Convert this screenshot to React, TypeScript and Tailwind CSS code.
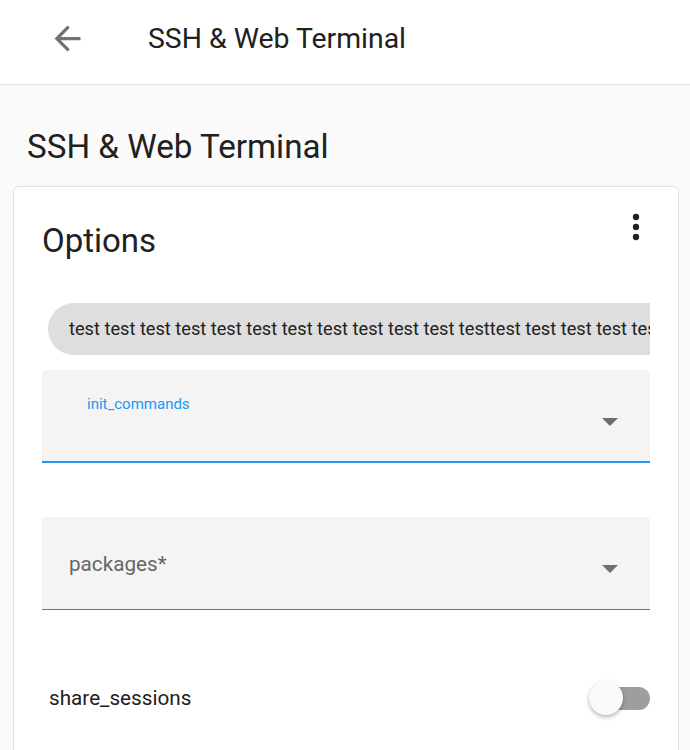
import React from 'react';

const ArrowBack = () => (
  <svg viewBox="0 0 24 24" className="w-[39px] h-[39px]" fill="#737373">
    <path d="M20 11H7.83l5.59-5.59L12 4l-8 8 8 8 1.41-1.41L7.83 13H20v-2z" />
  </svg>
);

const MoreVert = () => (
  <svg viewBox="0 0 24 24" className="w-[40px] h-[40px]" fill="#212121">
    <circle cx="12" cy="6" r="1.9" />
    <circle cx="12" cy="12" r="1.9" />
    <circle cx="12" cy="18" r="1.9" />
  </svg>
);

const DropArrow = () => (
  <svg viewBox="0 0 16 8" className="w-[16px] h-[8px] mt-[48px] mr-[32px] shrink-0" fill="#6e6e6e">
    <polygon points="0,0 16,0 8,8" />
  </svg>
);

const App = () => {
  const chipText =
    'test test test test test test test test test test test testtest test test test test test test';

  return (
    <div className="w-[690px] h-[750px] overflow-hidden bg-[#fafafa] text-[#212121] font-['Roboto',sans-serif]">
      {/* toolbar */}
      <div className="h-[85px] bg-white border-b-[1.5px] border-[#e0e0e0] flex items-center pl-[48px] pb-[8px]">
        <ArrowBack />
        <span className="ml-[61px] text-[28.4px] leading-[33px]">SSH &amp; Web Terminal</span>
      </div>

      <div className="pt-[42px]">
        <h1 className="pl-[27px] text-[33.2px] leading-[40px] mb-[19px]">SSH &amp; Web Terminal</h1>

        <div className="ml-[13px] mr-[11px] bg-white border border-[#e0e0e0] rounded-[6px] px-[28px] pt-[20px] pb-[40px]">
          <div className="flex items-start justify-between">
            <h2 className="mt-[14px] text-[33px] leading-[40px]">Options</h2>
            <div className="-mr-[6px]">
              <MoreVert />
            </div>
          </div>

          {/* chip */}
          <div className="mt-[42px] overflow-hidden">
            <div className="ml-[6px] h-[52px] inline-flex items-center rounded-full bg-[#dedede] pl-[21px] pr-[20px] whitespace-nowrap text-[18.2px]">
              {chipText}
            </div>
          </div>

          {/* init_commands select */}
          <div className="mt-[15px] h-[93px] bg-[#f4f4f4] rounded-t-[4px] border-b-2 border-[#2196f3] flex items-start">
            <div className="flex-1 pl-[45px] pt-[26px] text-[15px] leading-[17px] text-[#2196f3]">init_commands</div>
            <DropArrow />
          </div>

          {/* packages select */}
          <div className="mt-[54px] h-[93px] bg-[#f4f4f4] rounded-t-[4px] border-b border-[#767676] flex items-start">
            <div className="flex-1 pl-[27px] pt-[35px] text-[20.7px] leading-[24px] text-[#666666]">packages*</div>
            <DropArrow />
          </div>

          {/* share_sessions */}
          <div className="mt-[58px] h-[60px] flex items-center justify-between pl-[7px]">
            <span className="text-[20.7px] leading-[24px]">share_sessions</span>
            <div className="flex items-center">
              <div className="w-[34px] h-[34px] rounded-full bg-[#fafafa] shadow-[0_2px_4px_rgba(0,0,0,0.3)] z-10 relative" />
              <div className="w-[44px] h-[23px] rounded-r-full bg-[#9e9e9e] -ml-[17px]" />
            </div>
          </div>
        </div>
      </div>
    </div>
  );
};

export default App;
